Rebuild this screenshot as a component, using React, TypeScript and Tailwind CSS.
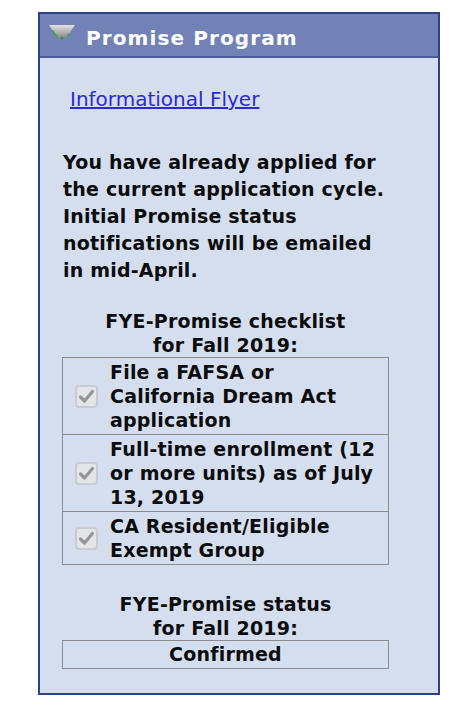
import React from "react";

function FunnelIcon() {
  return (
    <svg width="28" height="16" viewBox="0 0 28 16" className="block">
      <defs>
        <linearGradient id="fg" x1="0" y1="0" x2="0" y2="1">
          <stop offset="0" stopColor="#e2e2e2" />
          <stop offset="1" stopColor="#878787" />
        </linearGradient>
      </defs>
      <path d="M1 1 H27 L19.5 12.5 Q14 16 8.5 12.5 Z" fill="url(#fg)" />
      <path d="M4.5 6.5 L9 12.5" stroke="#3aa83a" strokeWidth="1.6" fill="none" />
      <path d="M19 12.5 L21.5 9.5" stroke="#3aa83a" strokeWidth="1.4" fill="none" />
      <circle cx="14" cy="14.2" r="1.4" fill="#2b9a2b" />
    </svg>
  );
}

function CheckBox() {
  return (
    <div className="w-[23px] h-[23px] rounded-[4px] border-2 border-[#c8cbd1] bg-[#e3e5e9] flex items-center justify-center">
      <svg width="17" height="15" viewBox="0 0 17 15">
        <path d="M2.5 8 L6.5 12 L14.5 2.5" stroke="#959595" strokeWidth="3.2" fill="none" strokeLinejoin="round" strokeLinecap="round" />
      </svg>
    </div>
  );
}

function Row({ lines, first }: { lines: string[]; first?: boolean }) {
  return (
    <div className={`flex items-center ${first ? "" : "border-t border-[#8c8c8c]"} pt-[2px] pb-[2px]`}>
      <div className="w-[47px] flex justify-center shrink-0">
        <CheckBox />
      </div>
      <div className="text-[19px] leading-[24px] font-bold whitespace-nowrap tracking-[0.2px]">
        {lines.map((l, i) => (
          <div key={i}>{l}</div>
        ))}
      </div>
    </div>
  );
}

export default function App() {
  return (
    <div
      className="w-[474px] h-[712px] bg-white pt-[12px] pl-[38px] text-[#0c0c0c]"
      style={{ fontFamily: '"DejaVu Sans", Verdana, sans-serif' }}
    >
      <div className="w-[402px] h-[683px] border-2 border-[#2e4385] bg-[#d5deef] flex flex-col">
        <div className="h-[44px] bg-[#7282b6] border-b-2 border-[#4a5b94] flex items-center pl-[8px]">
          <div className="-mt-[6px]">
            <FunnelIcon />
          </div>
          <span className="ml-[10px] mt-[6px] text-white font-bold text-[20px] tracking-[1.1px]">
            Promise Program
          </span>
        </div>
        <div className="pl-[22px] pr-[11px]">
          <a
            href="#"
            className="block mt-[29px] ml-[8px] text-[20px] leading-[24px] text-[#2b2bd3] underline"
          >
            Informational Flyer
          </a>
          <p className="mt-[38px] ml-[1px] font-bold text-[19px] leading-[27px] whitespace-nowrap tracking-[0.2px]">
            You have already applied for
            <br />
            the current application cycle.
            <br />
            Initial Promise status
            <br />
            notifications will be emailed
            <br />
            in mid-April.
          </p>
          <div className="mt-[25px] w-[327px] text-center font-bold text-[19px] leading-[24px] tracking-[0.2px]">
            FYE-Promise checklist
            <br />
            for Fall 2019:
          </div>
          <div className="w-[327px] border border-[#8c8c8c]">
            <Row first lines={["File a FAFSA or", "California Dream Act", "application"]} />
            <Row lines={["Full-time enrollment (12", "or more units) as of July", "13, 2019"]} />
            <Row lines={["CA Resident/Eligible", "Exempt Group"]} />
          </div>
          <div className="mt-[27px] w-[327px] text-center font-bold text-[19px] leading-[24px] tracking-[0.2px]">
            FYE-Promise status
            <br />
            for Fall 2019:
          </div>
          <div className="w-[327px] border border-[#8c8c8c] text-center font-bold text-[19px] leading-[27px] tracking-[0.2px]">
            Confirmed
          </div>
        </div>
      </div>
    </div>
  );
}
